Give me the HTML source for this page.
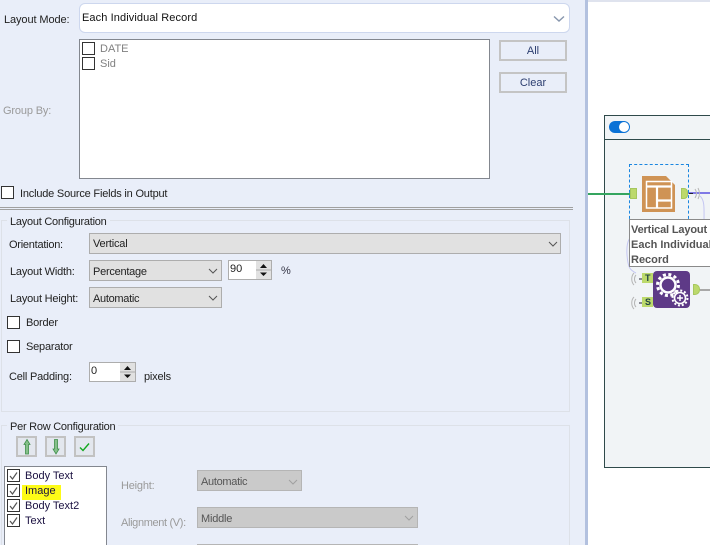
<!DOCTYPE html>
<html><head><meta charset="utf-8">
<style>
html,body{margin:0;padding:0;overflow:hidden;width:710px;height:545px}
#r{position:relative;width:710px;height:545px;overflow:hidden;background:#e9eef9;font-family:"Liberation Sans",sans-serif;font-size:11px;letter-spacing:-.2px;color:#222}
.a{position:absolute;box-sizing:border-box}
.t{position:absolute;white-space:nowrap;line-height:14px;margin-top:1px}
.g{color:#9a9a9a}
.cb{position:absolute;box-sizing:border-box;width:13px;height:13px;border:1px solid #333;background:#fff}
.sel{position:absolute;box-sizing:border-box;border:1px solid #adadad;background:#e1e1e1;height:21px}
.dis{background:#cacaca;border-color:#b5b5b5;color:#555}
.btn{position:absolute;box-sizing:border-box;width:68px;height:21px;border:2px solid #c4c4c4;background:#e9eef9;text-align:center;line-height:19px;color:#2c3e70;letter-spacing:0}
.gb{position:absolute;box-sizing:border-box;border:1px solid #dde1e8}
svg{position:absolute;overflow:visible}
</style></head><body><div id="r">

<!-- top dropdown -->
<div class="a" style="left:79px;top:3px;width:491px;height:30px;background:#fff;border:1px solid #cdd7ee;border-radius:6px"></div>
<div class="t" style="left:4px;top:12px;letter-spacing:-.1px">Layout Mode:</div>
<div class="t" style="left:82px;top:10px;color:#111;letter-spacing:.1px">Each Individual Record</div>
<svg style="left:553px;top:15px" width="12" height="8"><path d="M1 1.500L6 6L11 1.500" fill="none" stroke="#8796ad" stroke-width="1.4"/></svg>

<!-- list -->
<div class="a" style="left:79px;top:39px;width:411px;height:140px;background:#fff;border:1px solid #83878f"></div>
<div class="cb" style="left:82px;top:42px"></div>
<div class="t" style="left:100px;top:41px;color:#808080;letter-spacing:0">DATE</div>
<div class="cb" style="left:82px;top:57px"></div>
<div class="t" style="left:100px;top:56px;color:#808080;letter-spacing:0">Sid</div>
<div class="t g" style="left:3px;top:103px;letter-spacing:-.15px">Group By:</div>
<div class="btn" style="left:499px;top:40px">All</div>
<div class="btn" style="left:499px;top:72px">Clear</div>

<div class="cb" style="left:1px;top:186px"></div>
<div class="t" style="left:20px;top:186px">Include Source Fields in Output</div>

<!-- separator -->
<div class="a" style="left:0;top:207px;width:573px;height:1px;background:#a0a0a0"></div>
<div class="a" style="left:0;top:209px;width:573px;height:1px;background:#a0a0a0"></div>

<!-- Layout configuration -->
<div class="gb" style="left:1px;top:220px;width:569px;height:192px"></div>
<div class="t" style="left:7px;top:214px;background:#e9eef9;padding:0 3px;letter-spacing:-.25px">Layout Configuration</div>
<div class="t" style="left:9px;top:237px;letter-spacing:-.25px">Orientation:</div>
<div class="sel" style="left:89px;top:233px;width:472px"></div>
<div class="t" style="left:93px;top:236px">Vertical</div>
<svg style="left:548px;top:241px" width="10" height="6"><path d="M1 1L5 5L9 1" fill="none" stroke="#555" stroke-width="1"/></svg>

<div class="t" style="left:10px;top:264px">Layout Width:</div>
<div class="sel" style="left:89px;top:260px;width:133px"></div>
<div class="t" style="left:93px;top:264px;letter-spacing:-.25px">Percentage</div>
<svg style="left:208px;top:268px" width="10" height="6"><path d="M1 1L5 5L9 1" fill="none" stroke="#555" stroke-width="1"/></svg>
<div class="a" style="left:228px;top:260px;width:44px;height:20px;background:#fff;border:1px solid #adadad"></div>
<div class="t" style="left:230px;top:261px;letter-spacing:0">90</div>
<div class="a" style="left:256px;top:261px;width:15px;height:18px;background:#e1e1e1"></div>
<svg style="left:256px;top:261px" width="15" height="18"><path d="M4 7L7.500 3L11 7Z M4 11.500L7.500 15L11 11.500Z" fill="#111"/><path d="M0 9H15" stroke="#aaa"/></svg>
<div class="t" style="left:281px;top:263px;color:#334;letter-spacing:-.3px">%</div>

<div class="t" style="left:10px;top:291px">Layout Height:</div>
<div class="sel" style="left:89px;top:287px;width:133px"></div>
<div class="t" style="left:93px;top:291px;letter-spacing:-.3px">Automatic</div>
<svg style="left:208px;top:295px" width="10" height="6"><path d="M1 1L5 5L9 1" fill="none" stroke="#555" stroke-width="1"/></svg>

<div class="cb" style="left:7px;top:316px"></div>
<div class="t" style="left:26px;top:315px">Border</div>
<div class="cb" style="left:7px;top:340px"></div>
<div class="t" style="left:26px;top:339px">Separator</div>

<div class="t" style="left:9px;top:369px">Cell Padding:</div>
<div class="a" style="left:89px;top:362px;width:47px;height:20px;background:#fff;border:1px solid #adadad"></div>
<div class="t" style="left:91px;top:363px">0</div>
<div class="a" style="left:120px;top:363px;width:15px;height:18px;background:#e1e1e1"></div>
<svg style="left:120px;top:363px" width="15" height="18"><path d="M4 7L7.500 3L11 7Z M4 11.500L7.500 15L11 11.500Z" fill="#111"/><path d="M0 9H15" stroke="#aaa"/></svg>
<div class="t" style="left:144px;top:369px;letter-spacing:-.2px">pixels</div>

<!-- Per row -->
<div class="gb" style="left:1px;top:425px;width:569px;height:130px"></div>
<div class="t" style="left:7px;top:419px;background:#e9eef9;padding:0 3px;letter-spacing:-.25px">Per Row Configuration</div>
<div class="a" style="left:16px;top:436px;width:21px;height:21px;border:2px solid #c2c2c2;background:#e3e7ee"></div>
<div class="a" style="left:45px;top:436px;width:21px;height:21px;border:2px solid #c2c2c2;background:#e3e7ee"></div>
<div class="a" style="left:74px;top:436px;width:21px;height:21px;border:2px solid #c2c2c2;background:#e3e7ee"></div>
<svg style="left:16px;top:436px" width="80" height="21">
<path d="M11 3.500L14 8.500H12.500V18H9.500V8.500H8Z" fill="#86c08a" stroke="#3f8f4a" stroke-width=".8"/>
<path d="M38.500 3.500H41.500V13H43L40 18L37 13H38.500Z" fill="#86c08a" stroke="#3f8f4a" stroke-width=".8"/>
<path d="M64 11.500L67 14.500L73 7.500" fill="none" stroke="#12a81e" stroke-width="1.400"/>
</svg>

<div class="a" style="left:4px;top:466px;width:103px;height:90px;background:#fff;border:1px solid #83878f"></div>
<div class="a" style="left:22px;top:485px;width:39px;height:15px;background:#fdfb17"></div>
<div class="cb" style="left:7px;top:469px"></div>
<div class="cb" style="left:7px;top:484px"></div>
<div class="cb" style="left:7px;top:499px"></div>
<div class="cb" style="left:7px;top:514px"></div>
<svg style="left:7px;top:469px" width="13" height="60"><path d="M3 7L5.500 10L10 3.500M3 22L5.500 25L10 18.500M3 37L5.500 40L10 33.500M3 52L5.500 55L10 48.500" fill="none" stroke="#555" stroke-width="1.2"/></svg>
<div class="t" style="left:25px;top:468px;color:#1a1040;letter-spacing:0">Body Text</div>
<div class="t" style="left:25px;top:483px;color:#1a1040;letter-spacing:0">Image</div>
<div class="t" style="left:25px;top:498px;color:#1a1040;letter-spacing:0">Body Text2</div>
<div class="t" style="left:25px;top:513px;color:#1a1040;letter-spacing:0">Text</div>

<div class="t g" style="left:121px;top:478px">Height:</div>
<div class="sel dis" style="left:197px;top:470px;width:105px"></div>
<div class="t" style="left:201px;top:474px;color:#555;letter-spacing:-.3px">Automatic</div>
<svg style="left:288px;top:479px" width="10" height="6"><path d="M1 1L5 5L9 1" fill="none" stroke="#a0a0a0" stroke-width="1"/></svg>
<div class="t g" style="left:121px;top:515px;letter-spacing:-.35px">Alignment (V):</div>
<div class="sel dis" style="left:197px;top:507px;width:221px"></div>
<div class="t" style="left:201px;top:511px;color:#555">Middle</div>
<svg style="left:404px;top:515px" width="10" height="6"><path d="M1 1L5 5L9 1" fill="none" stroke="#a0a0a0" stroke-width="1"/></svg>
<div class="sel dis" style="left:197px;top:544px;width:221px"></div>

<!-- right canvas -->
<div class="a" style="left:585px;top:0;width:3px;height:545px;background:#b3c1df"></div>
<div class="a" style="left:588px;top:0;width:122px;height:545px;background:#fff"></div>
<div class="a" style="left:588px;top:0;width:122px;height:2px;background:#dfe3ee"></div>
<div class="a" style="left:604px;top:115px;width:110px;height:353px;background:#f1f4f6;border:1px solid #2f4a4a"></div>
<div class="a" style="left:604px;top:139px;width:106px;height:1px;background:#2f4a4a"></div>
<div class="a" style="left:609px;top:121px;width:21px;height:12px;background:#0b72d6;border-radius:6px"></div>
<div class="a" style="left:619px;top:122px;width:10px;height:10px;background:#fff;border-radius:50%"></div>

<!-- wires -->
<div class="a" style="left:588px;top:193px;width:44px;height:2px;background:#35a55f"></div>
<svg style="left:600px;top:160px" width="110" height="160">
<path d="M88 33H110" stroke="#5a50e0" stroke-width="1.5" fill="none"/>
<path d="M100 36C105 40 104 50 104 62C104 72 100 74 90 74L40 74C30 74 26 80 27 95C28 108 30 110 36 113" fill="none" stroke="#c4c6f2" stroke-width="1"/>
</svg>

<!-- selection and tool -->
<div class="a" style="left:629px;top:164px;width:60px;height:60px;border:1px dashed #1a86e0"></div>
<div class="a" style="left:630px;top:188px;width:7px;height:11px;background:#bcd96c;border:1px solid #a6c75e"></div>
<div class="a" style="left:681px;top:188px;width:7px;height:11px;background:#bcd96c;border-radius:0 4px 4px 0;border:1px solid #a6c75e"></div>
<svg style="left:642px;top:175px" width="34" height="37">
<path d="M0 1H24L33 10V37H0Z" fill="#cf9355"/>
<rect x="4.500" y="6.500" width="25" height="26.500" fill="none" stroke="#fff" stroke-width="1.500"/>
<path d="M4.500 11.500H29.500M15 11.500V33M15 25.500H29.500" stroke="#fff" stroke-width="2.200" fill="none"/>
</svg>
<div class="a" style="left:629px;top:219px;width:90px;height:48px;background:#fff;border:1px solid #8a8a8a"></div>
<div class="t" style="left:631px;top:222px;color:#555;font-weight:bold;letter-spacing:-.15px;font-size:11px">Vertical Layout</div>
<div class="t" style="left:631px;top:237px;color:#555;font-weight:bold;letter-spacing:0;font-size:11px">Each Individual</div>
<div class="t" style="left:631px;top:252px;color:#555;font-weight:bold;letter-spacing:0;font-size:11px">Record</div>

<!-- formula tool -->
<div class="a" style="left:653px;top:271px;width:37px;height:37px;background:#5e3a87;border-radius:4px"></div>
<svg style="left:653px;top:271px" width="37" height="37">
<circle cx="15" cy="14" r="7.500" fill="none" stroke="#fff" stroke-width="2.500"/>
<circle cx="15" cy="14" r="10.500" fill="none" stroke="#fff" stroke-width="3" stroke-dasharray="3 2.500"/>
<circle cx="27" cy="27" r="5.500" fill="none" stroke="#fff" stroke-width="1.600"/>
<circle cx="27" cy="27" r="7.500" fill="none" stroke="#fff" stroke-width="2" stroke-dasharray="2 1.930"/>
<path d="M24 27H30M27 24V30" stroke="#fff" stroke-width="1.500"/>
</svg>
<div class="a" style="left:642px;top:273px;width:11px;height:10px;background:#bcd96c"></div>
<div class="t" style="left:645px;top:270px;font-size:9px;font-weight:bold;color:#244;letter-spacing:0">T</div>
<div class="a" style="left:642px;top:297px;width:11px;height:10px;background:#bcd96c"></div>
<div class="t" style="left:645px;top:294px;font-size:9px;font-weight:bold;color:#244;letter-spacing:0">S</div>
<svg style="left:631px;top:272px" width="12" height="36" fill="none" stroke="#b5b5b5">
<path d="M3 1C0 4 0 10 3 13M5 3C3 5 3 9 5 11M3 25C0 28 0 34 3 37M5 27C3 29 3 33 5 35"/>
<path d="M8 7H11M8 31H11" stroke="#223"/>
</svg>
<div class="a" style="left:693px;top:284px;width:7px;height:11px;background:#bcd96c;border-radius:0 5px 5px 0;border:1px solid #a6c75e"></div>
<div class="a" style="left:700px;top:289px;width:10px;height:2px;background:#a8a8a8"></div>
<svg style="left:689px;top:186px" width="12" height="14" fill="none" stroke="#b5b5b5"><path d="M6 3C8 6 8 9 6 12M9 2C11 6 11 9 9 13"/><path d="M0 7.500H4" stroke="#223"/></svg>

</div></body></html>
